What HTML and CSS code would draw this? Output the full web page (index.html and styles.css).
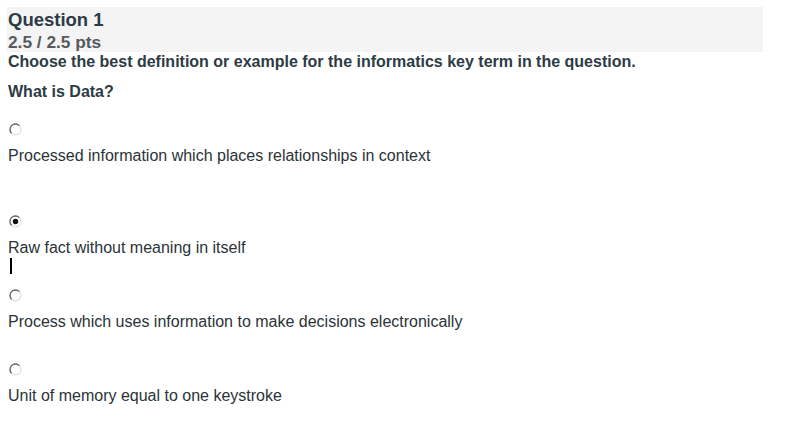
FILE: index.html
```html
<!DOCTYPE html>
<html lang="en">
<head>
<meta charset="utf-8">
<title>Question 1</title>
<link rel="stylesheet" href="styles.css">
</head>
<body>
<div class="question">
  <div class="header">
    <div class="title">Question 1</div>
    <div class="pts">2.5 / 2.5 pts</div>
  </div>
  <div class="instructions">Choose the best definition or example for the informatics key term in the question.</div>
  <div class="prompt">What is Data?</div>
  <div class="answers">
    <div class="option option-first">
      <svg class="radio" width="13" height="13" viewBox="0 0 13 13"><circle cx="6.5" cy="6.5" r="5.5" fill="#fff" stroke="#d2d2d2" stroke-width="1"/><path d="M10.4 2.6 A5.5 5.5 0 0 0 2.6 10.4" fill="none" stroke="#666" stroke-width="1.3"/></svg>
      <div class="text">Processed information which places relationships in context</div>
    </div>
    <div class="option">
      <svg class="radio" width="13" height="13" viewBox="0 0 13 13"><circle cx="6.5" cy="6.5" r="5.5" fill="#fff" stroke="#d2d2d2" stroke-width="1"/><path d="M10.4 2.6 A5.5 5.5 0 0 0 2.6 10.4" fill="none" stroke="#666" stroke-width="1.3"/><circle cx="6.5" cy="6.5" r="2.7" fill="#111"/></svg>
      <div class="text text-cursor">Raw fact without meaning in itself<span class="cursor"></span></div>
    </div>
    <div class="option">
      <svg class="radio" width="13" height="13" viewBox="0 0 13 13"><circle cx="6.5" cy="6.5" r="5.5" fill="#fff" stroke="#d2d2d2" stroke-width="1"/><path d="M10.4 2.6 A5.5 5.5 0 0 0 2.6 10.4" fill="none" stroke="#666" stroke-width="1.3"/></svg>
      <div class="text">Process which uses information to make decisions electronically</div>
    </div>
    <div class="option">
      <svg class="radio" width="13" height="13" viewBox="0 0 13 13"><circle cx="6.5" cy="6.5" r="5.5" fill="#fff" stroke="#d2d2d2" stroke-width="1"/><path d="M10.4 2.6 A5.5 5.5 0 0 0 2.6 10.4" fill="none" stroke="#666" stroke-width="1.3"/></svg>
      <div class="text">Unit of memory equal to one keystroke</div>
    </div>
  </div>
</div>
</body>
</html>
```
FILE: styles.css
```css
html, body {
  margin: 0;
  padding: 0;
  background: #fff;
}
body {
  font-family: "Liberation Sans", Arial, sans-serif;
  color: #2d3b45;
}
.question {
  padding-top: 7px;
}
.header {
  margin-left: 7px;
  width: 756px;
  height: 45px;
  box-sizing: border-box;
  padding-top: 2px;
  padding-left: 1px;
  background: #f4f4f4;
}
.title {
  font-size: 18.5px;
  font-weight: bold;
  line-height: 22px;
  color: #2d3b45;
}
.pts {
  font-size: 17.3px;
  font-weight: bold;
  line-height: 22px;
  color: #555a5e;
}
.instructions {
  margin-left: 8px;
  font-size: 16px;
  font-weight: bold;
  line-height: 20px;
}
.prompt {
  margin-left: 8px;
  margin-top: 10px;
  font-size: 16px;
  font-weight: bold;
  line-height: 20px;
}
.answers {
  margin-top: 21px;
  display: flex;
  flex-direction: column;
  gap: 31px;
}
.option {
  display: flex;
  flex-direction: column;
  align-items: flex-start;
}
.option-first {
  margin-bottom: 18px;
}
.radio {
  display: block;
  margin-left: 9px;
  margin-bottom: 10px;
}
.text {
  margin-left: 8px;
  font-size: 16px;
  line-height: 20px;
  color: #2b3338;
}
.text-cursor {
  position: relative;
}
.cursor {
  position: absolute;
  left: 2px;
  top: 20px;
  width: 2px;
  height: 16px;
  background: #000;
}
```
